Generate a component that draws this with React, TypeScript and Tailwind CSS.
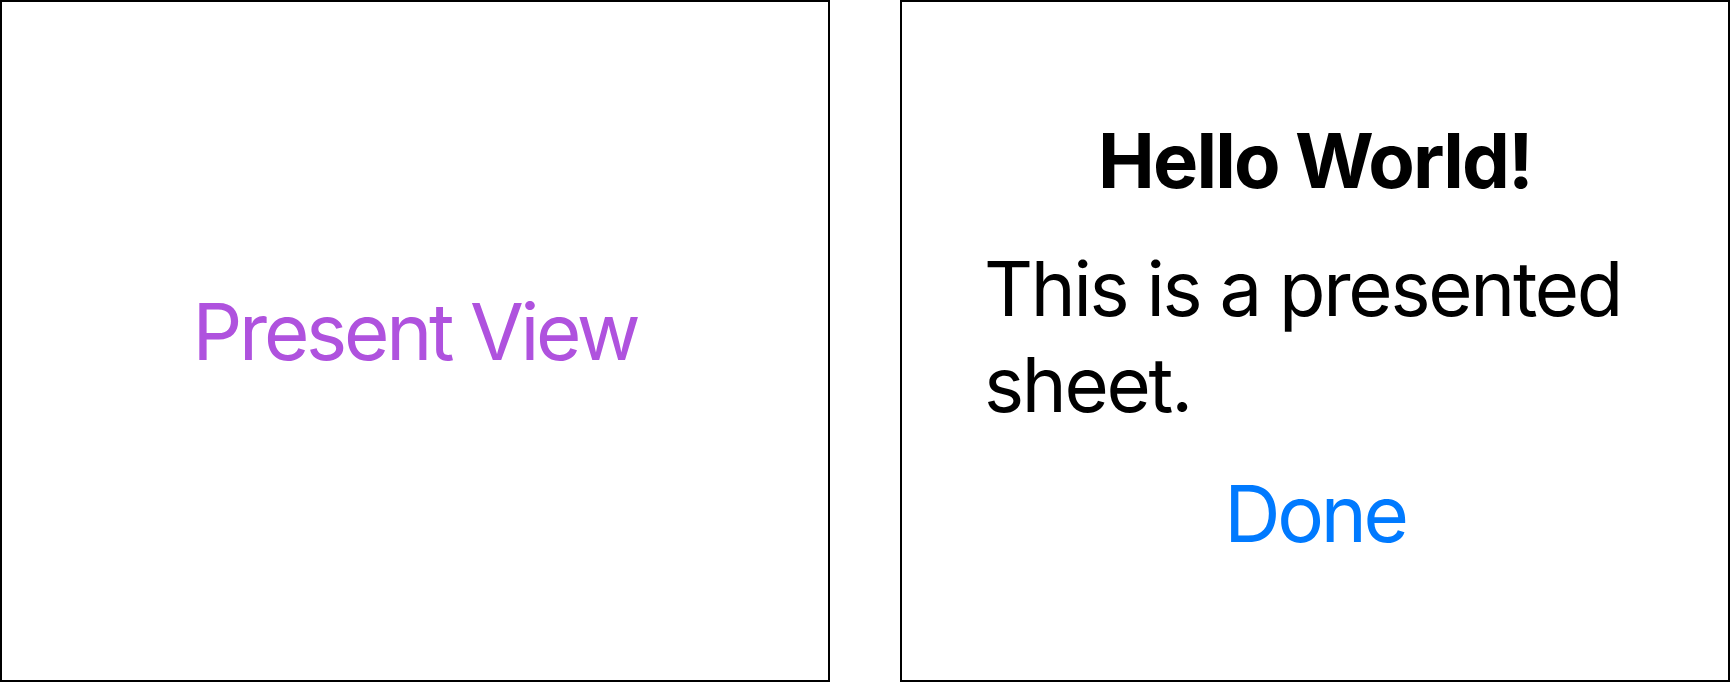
export default function App() {
  return (
    <div
      className="flex h-[682px] w-[1730px] gap-[70px] bg-white"
      style={{ fontFamily: 'Inter, "Noto Sans", sans-serif' }}
    >
      {/* presenting view */}
      <div className="flex h-full w-[830px] items-center justify-center border-2 border-black pb-[18px]">
        <button className="text-[78px] leading-[96px] tracking-[-0.042em] text-[#af52de]">
          Present View
        </button>
      </div>

      {/* presented sheet */}
      <div className="flex h-full w-[830px] flex-col items-center border-2 border-black pt-[110px]">
        <h1 className="text-[76px] font-bold leading-[96px] tracking-[-0.024em] text-black">
          Hello World!
        </h1>
        <p className="mt-[32px] self-stretch pl-[82px] pr-[50px] text-left text-[76px] leading-[96px] tracking-[-0.03em] text-black">
          This is a presented sheet.
        </p>
        <button className="mt-[34px] text-[78px] leading-[96px] tracking-[-0.042em] text-[#007aff]">
          Done
        </button>
      </div>
    </div>
  );
}
